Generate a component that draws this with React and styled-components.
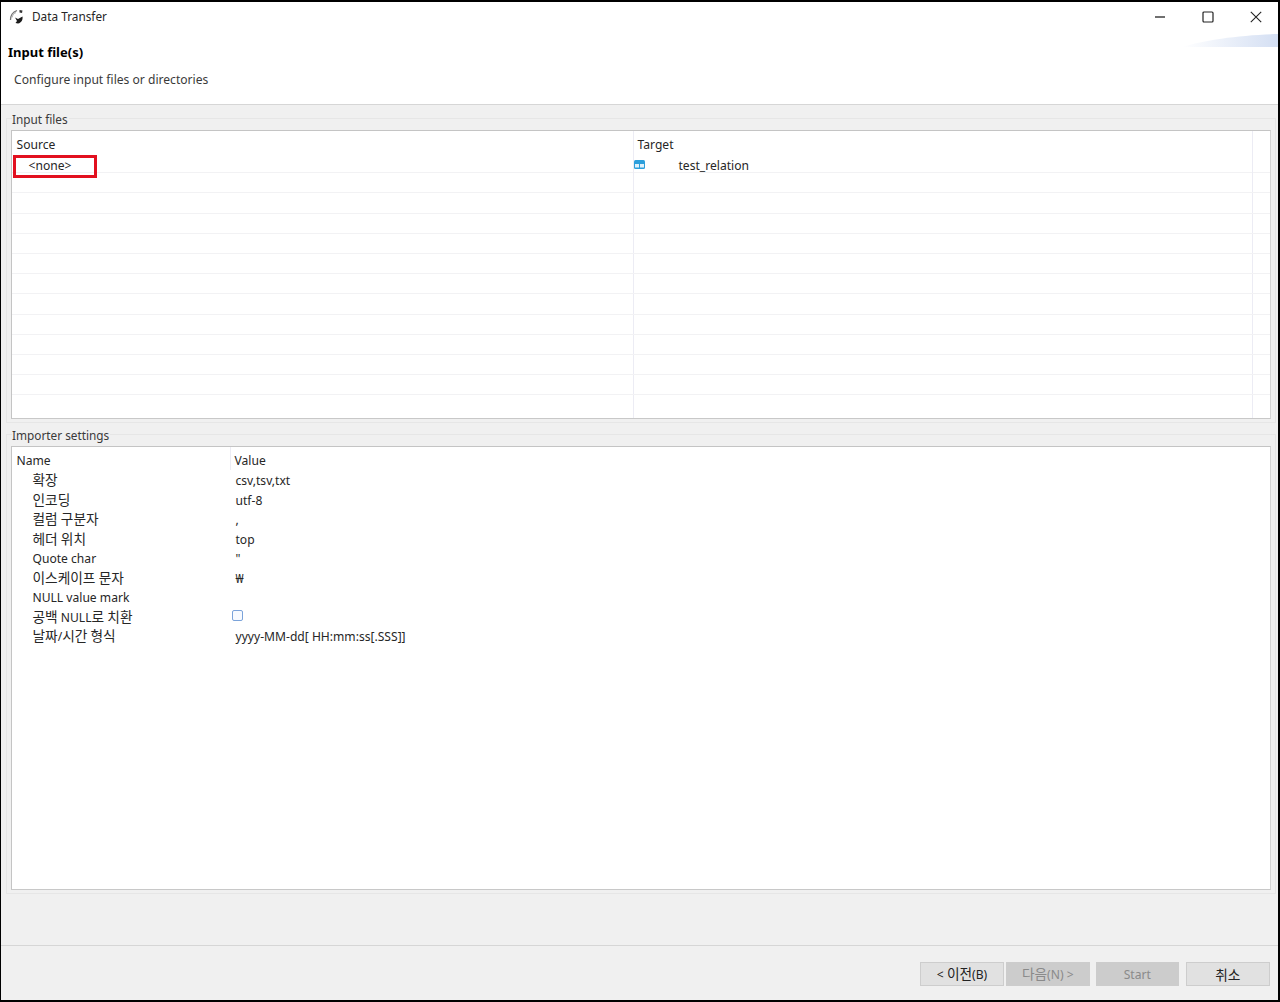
import React from 'react';
import styled, { createGlobalStyle } from 'styled-components';

const Global = createGlobalStyle`
  html, body { margin: 0; padding: 0; background: #f0f0f0; }
  * { box-sizing: border-box; }
`;

const Win = styled.div`
  width: 1280px;
  height: 1002px;
  border: 2px solid #000;
  border-left-width: 1.5px;
  background: #f0f0f0;
  display: flex;
  flex-direction: column;
  color: #262626;
  font: 12.1px/18px "Noto Sans", "Noto Sans CJK KR", sans-serif;
  overflow: hidden;
`;

const Ko = styled.span`
  font-size: 13.7px;
  line-height: 1;
`;

const Header = styled.div`
  position: relative;
  height: 103px;
  background: #fff;
  border-bottom: 1.5px solid #d6d6d6;
  flex: none;
`;

const TitleBar = styled.div`
  height: 30px;
  display: flex;
  align-items: center;
  padding-left: 8px;
  gap: 7px;
  font-size: 11.8px;
`;

const TitleText = styled.span`
  margin-bottom: 2px;
`;

const TitleIcon = styled.svg`
  margin-bottom: 2px;
`;

const WinButtons = styled.div`
  margin-left: auto;
  margin-right: -1.5px;
  display: flex;
  align-items: center;
  height: 100%;
`;

const WinButton = styled.div`
  width: 48px;
  height: 28px;
  display: flex;
  align-items: center;
  justify-content: center;
`;

const PageTitle = styled.div`
  margin: 11px 0 0 7px;
  font-weight: 700;
  font-size: 13px;
  color: #000;
`;

const PageDesc = styled.div`
  margin: 10px 0 0 13px;
  color: #3a3a3a;
`;

const Banner = styled.svg`
  position: absolute;
  right: 0;
  top: 31px;
`;

const Body = styled.div`
  flex: 1;
  display: flex;
  flex-direction: column;
  padding: 6px 2px 0 5px;
`;

const Group = styled.div`
  position: relative;
  margin-top: ${p => p.$top}px;
  height: ${p => p.$height}px;
  border: 1.5px solid #e6e6e6;
  padding: 11px 4px 3px 3.5px;
  display: flex;
  flex-direction: column;
`;

const GroupLabel = styled.div`
  position: absolute;
  left: 5px;
  top: -9px;
  background: #f0f0f0;
  padding-right: 1px;
  font-size: 11.8px;
  color: #3a3a3a;
`;

const Panel = styled.div`
  flex: 1;
  background: #fff;
  border: 1.5px solid #c4c4c4;
  border-right-color: #d4d4d4;
  border-bottom-color: #c8c8c8;
  position: relative;
  overflow: hidden;
`;

const Row = styled.div`
  display: grid;
  grid-template-columns: ${p => p.$cols};
  height: ${p => p.$h}px;
  border-bottom: ${p => (p.$line ? '1px solid #f2f2f4' : 'none')};
`;

const Cell = styled.div`
  display: flex;
  align-items: center;
  padding-left: ${p => p.$pad || 0}px;
  padding-top: ${p => p.$nudge || 0}px;
  gap: 34px;
  white-space: pre;
  border-right: ${p => (p.$divider ? '1px solid #ececf4' : 'none')};
  min-width: 0;
`;

const Highlight = styled.div`
  position: absolute;
  left: 1px;
  top: 23.5px;
  width: 84px;
  height: 23px;
  border: 3px solid #e2101f;
`;

const Check = styled.span`
  width: 11px;
  height: 11px;
  margin: -4px 0 0 -4px;
  border: 1.5px solid #7ba3da;
  border-radius: 2px;
  background: #f7faff;
  display: block;
`;

const TableGlyph = styled.svg`
  margin-top: -4px;
`;

const Footer = styled.div`
  margin-top: auto;
  height: 55px;
  border-top: 1.5px solid #d6d6d6;
  display: flex;
  justify-content: flex-end;
  align-items: flex-start;
  padding: 16px 8.5px 0 0;
  flex: none;
`;

const Btn = styled.div`
  width: ${p => p.$w || 83.5}px;
  height: 24px;
  margin-left: ${p => p.$gap || 0}px;
  padding-top: 2px;
  display: flex;
  align-items: center;
  justify-content: center;
  white-space: pre;
  background: ${p => (p.$off ? '#cccccc' : '#e1e1e1')};
  border: 1px solid ${p => (p.$off ? '#cccccc' : '#cdcdcd')};
  color: ${p => (p.$off ? '#8a8a8a' : '#222')};
`;

const sourceCols = '622px 619px 1fr';
const settingCols = '219px 1fr';

const settings = [
  ['확장', 'csv,tsv,txt'],
  ['인코딩', 'utf-8'],
  ['컬럼 구분자', ','],
  ['헤더 위치', 'top'],
  ['Quote char', '"'],
  ['이스케이프 문자', '₩'],
  ['NULL value mark', ''],
  ['공백 NULL로 치환', null],
  ['날짜/시간 형식', 'yyyy-MM-dd[ HH:mm:ss[.SSS]]'],
];

// hangul runs sit larger than latin in the original font mix
const Mixed = ({ text }) =>
  text.split(/([가-힣]+)/).map((part, i) => (i % 2 ? <Ko key={i}>{part}</Ko> : part));

const AppIcon = () => (
  <TitleIcon width="16" height="16" viewBox="0 0 16 16">
    <path d="M1.500 12C1.500 8 4 4 8 2.500" fill="none" stroke="#777" strokeWidth="1.300" />
    <path d="M3 9.500C3.500 7 5 5.500 7 4.500" fill="none" stroke="#aaa" strokeWidth="1" />
    <path d="M10.500 2l3 .5-.5 2.500-2.500-.5z" fill="#333" />
    <path d="M6 9.500l3 1.500 4.500-2.500c.5 3-1 6.500-4.500 7l-2.500-.5 1.500-2z" fill="#1c1c1c" />
  </TitleIcon>
);

const TableIcon = () => (
  <TableGlyph width="11" height="9" viewBox="0 0 11 9">
    <rect width="11" height="9" rx="1.500" fill="#2c9fdc" />
    <rect x="1" y="4" width="4" height="3.500" fill="#dff1fb" />
    <rect x="6" y="4" width="4" height="3.500" fill="#dff1fb" />
  </TableGlyph>
);

export default function App() {
  return (
    <>
      <Global />
      <Win>
        <Header>
          <TitleBar>
            <AppIcon />
            <TitleText>Data Transfer</TitleText>
            <WinButtons>
              <WinButton>
                <svg width="12" height="12" viewBox="0 0 12 12"><path d="M1 6h10" stroke="#222" strokeWidth="1.300" /></svg>
              </WinButton>
              <WinButton>
                <svg width="12" height="12" viewBox="0 0 12 12"><rect x="1" y="1" width="10" height="10" rx="1" fill="none" stroke="#222" strokeWidth="1.200" /></svg>
              </WinButton>
              <WinButton>
                <svg width="12" height="12" viewBox="0 0 12 12"><path d="M.8.800l10.400 10.400M11.200.8L.8 11.200" stroke="#222" strokeWidth="1.100" /></svg>
              </WinButton>
            </WinButtons>
          </TitleBar>
          <PageTitle>Input file(s)</PageTitle>
          <PageDesc>Configure input files or directories</PageDesc>
          <Banner width="96" height="15" viewBox="0 0 96 15">
            <defs>
              <linearGradient id="band" x1="0" x2="1" y1="0" y2="0">
                <stop offset="0" stopColor="#fff" />
                <stop offset="1" stopColor="#d4dff3" />
              </linearGradient>
            </defs>
            <path d="M0 14C22 7 58 2 96 1V14z" fill="url(#band)" />
          </Banner>
        </Header>
        <Body>
          <Group $top={7} $height={305}>
            <GroupLabel>Input files</GroupLabel>
            <Panel>
              <Row $cols={sourceCols} $h={22}>
                <Cell $pad={5} $nudge={5} $divider>Source</Cell>
                <Cell $pad={4} $nudge={5} $divider>Target</Cell>
                <Cell />
              </Row>
              <Row $cols={sourceCols} $h={20.200} $line>
                <Cell $pad={17} $nudge={4} $divider>{'<none>'}</Cell>
                <Cell $nudge={4} $divider><TableIcon /><span>test_relation</span></Cell>
                <Cell />
              </Row>
              {Array.from({ length: 12 }, (_, i) => (
                <Row key={i} $cols={sourceCols} $h={i === 11 ? 23 : 20.200} $line={i < 11}>
                  <Cell $divider />
                  <Cell $divider />
                  <Cell />
                </Row>
              ))}
              <Highlight />
            </Panel>
          </Group>
          <Group $top={11} $height={460}>
            <GroupLabel>Importer settings</GroupLabel>
            <Panel>
              <Row $cols={settingCols} $h={23}>
                <Cell $pad={5} $nudge={4} $divider>Name</Cell>
                <Cell $pad={4} $nudge={4}>Value</Cell>
              </Row>
              {settings.map(([name, value]) => (
                <Row key={name} $cols={settingCols} $h={19.500}>
                  <Cell $pad={21} $nudge={2}><span><Mixed text={name} /></span></Cell>
                  <Cell $pad={5} $nudge={2}>{value === null ? <Check /> : value}</Cell>
                </Row>
              ))}
            </Panel>
          </Group>
        </Body>
        <Footer>
          <Btn $w={84}><span>&lt; <Mixed text="이전(B)" /></span></Btn>
          <Btn $gap={2} $off><span><Mixed text="다음(N) >" /></span></Btn>
          <Btn $gap={6} $off>Start</Btn>
          <Btn $gap={7}><Ko>취소</Ko></Btn>
        </Footer>
      </Win>
    </>
  );
}
